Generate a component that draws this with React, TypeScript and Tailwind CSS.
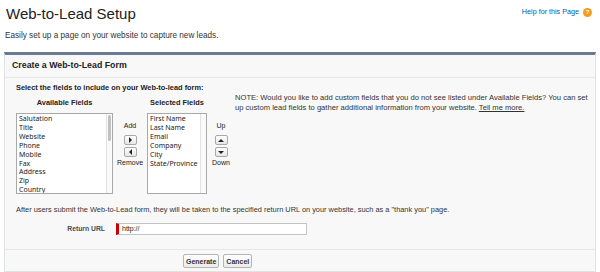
import React from 'react';

const available = ['Salutation', 'Title', 'Website', 'Phone', 'Mobile', 'Fax', 'Address', 'Zip', 'Country'];
const selected = ['First Name', 'Last Name', 'Email', 'Company', 'City', 'State/Province'];

const ListBox: React.FC<{ items: string[]; width: string; thumb?: boolean }> = ({ items, width, thumb }) => (
  <div className={`flex h-[81px] ${width} border border-[#a9a9a9] bg-white`}>
    <div className="flex-1 overflow-hidden pl-[2px] pt-[1px] font-['Noto_Sans',sans-serif] text-[7px] leading-[8.9px] text-[#222]">
      {items.map(i => (
        <div key={i} className="whitespace-nowrap">{i}</div>
      ))}
    </div>
    <div className="w-[6px] border-l border-[#e2e2e2] bg-[#fafafa] px-[1px] pt-[1px]">
      {thumb && <div className="h-[26px] rounded-full bg-[#c1c1c1]" />}
    </div>
  </div>
);

const SmallBtn: React.FC<{ children: React.ReactNode }> = ({ children }) => (
  <div className="flex h-[10px] w-[13px] items-center justify-center rounded-[2px] border border-[#a8a8a8] bg-gradient-to-b from-white to-[#e6e6e6]">
    {children}
  </div>
);

export default function App() {
  return (
    <div className="h-[272px] w-[600px] overflow-hidden bg-white font-['Liberation_Sans',Arial,sans-serif] text-[#222]">
      <div className="flex items-start justify-between pl-[6px] pr-[8px] pt-[3px]">
        <h1 className="text-[15px] leading-[22px] text-[#222]">Web-to-Lead Setup</h1>
        <div className="mt-[4px] flex items-center gap-[4px]">
          <span className="text-[7.2px] text-[#015ba7]">Help for this Page</span>
          <span className="flex h-[9px] w-[9px] items-center justify-center rounded-full bg-[#f39c1e] text-[6px] font-bold leading-none text-white">?</span>
        </div>
      </div>
      <p className="mt-[6px] pl-[5px] text-[8.2px] leading-[10px] text-[#333]">
        Easily set up a page on your website to capture new leads.
      </p>

      <div className="mx-[4px] mt-[11px] border border-t-[3px] border-[#e0e3e5] border-t-[#6b7a93] bg-[#f8f8f8]">
        <div className="border-b border-[#e6e6e6] pb-[6px] pl-[7px] pt-[4px] text-[8.8px] font-bold leading-[12px]">
          Create a Web-to-Lead Form
        </div>

        <div className="pl-[11px] pt-[5px]">
          <div className="flex">
            <div>
              <div className="text-[7.4px] font-bold leading-[10px]">Select the fields to include on your Web-to-lead form:</div>

              <div className="mt-[5px] flex">
                <div className="flex flex-col items-center">
                  <div className="text-[7.4px] font-bold leading-[10px]">Available Fields</div>
                  <div className="mt-[5px]">
                    <ListBox items={available} width="w-[97px]" thumb />
                  </div>
                </div>

                <div className="mt-[23px] flex w-[34px] flex-col items-center text-[7px] leading-[10px]">
                  <div>Add</div>
                  <div className="mt-[4px]">
                    <SmallBtn><span className="block h-0 w-0 border-y-[3px] border-l-[3px] border-y-transparent border-l-[#222]" /></SmallBtn>
                  </div>
                  <div className="mt-[2px]">
                    <SmallBtn><span className="block h-0 w-0 border-y-[3px] border-r-[3px] border-y-transparent border-r-[#222]" /></SmallBtn>
                  </div>
                  <div className="mt-[1px]">Remove</div>
                </div>

                <div className="flex flex-col items-center">
                  <div className="text-[7.4px] font-bold leading-[10px]">Selected Fields</div>
                  <div className="mt-[5px]">
                    <ListBox items={selected} width="w-[60px]" />
                  </div>
                </div>

                <div className="mt-[23px] flex w-[28px] flex-col items-center text-[7px] leading-[10px]">
                  <div>Up</div>
                  <div className="mt-[4px]">
                    <SmallBtn><span className="block h-0 w-0 border-x-[3px] border-b-[3px] border-x-transparent border-b-[#222]" /></SmallBtn>
                  </div>
                  <div className="mt-[2px]">
                    <SmallBtn><span className="block h-0 w-0 border-x-[3px] border-t-[3px] border-x-transparent border-t-[#222]" /></SmallBtn>
                  </div>
                  <div className="mt-[1px]">Down</div>
                </div>
              </div>
            </div>

            <p className="mt-[10px] w-[360px] text-[7.6px] leading-[10px] text-[#333]">
              NOTE: Would you like to add custom fields that you do not see listed under Available Fields? You can set up custom lead fields to gather additional information from your website.{' '}
              <span className="underline">Tell me more.</span>
            </p>
          </div>

          <p className="mt-[11px] text-[7.4px] leading-[10px] text-[#333]">
            After users submit the Web-to-Lead form, they will be taken to the specified return URL on your website, such as a "thank you" page.
          </p>

          <div className="mt-[8px] flex items-center">
            <div className="w-[89px] text-right text-[6.8px] font-bold text-[#4a4a56]">Return URL</div>
            <div className="ml-[11px] flex h-[12px] w-[191px] items-center border border-[#c4c4c4] border-l-[3px] border-l-[#c00] bg-white pl-[3px] text-[7px] text-[#222]">
              http://
            </div>
          </div>
        </div>

        <div className="mt-[14px] flex gap-[4px] border-t border-[#e6e6e6] pb-[3px] pl-[178px] pt-[4px]">
          <button className="h-[14px] rounded-[2px] border border-[#b5b5b5] bg-gradient-to-b from-white to-[#ececec] px-[2px] text-[7px] font-bold leading-none text-[#333]">Generate</button>
          <button className="h-[14px] rounded-[2px] border border-[#b5b5b5] bg-gradient-to-b from-white to-[#ececec] px-[2px] text-[7px] font-bold leading-none text-[#333]">Cancel</button>
        </div>
      </div>
    </div>
  );
}
